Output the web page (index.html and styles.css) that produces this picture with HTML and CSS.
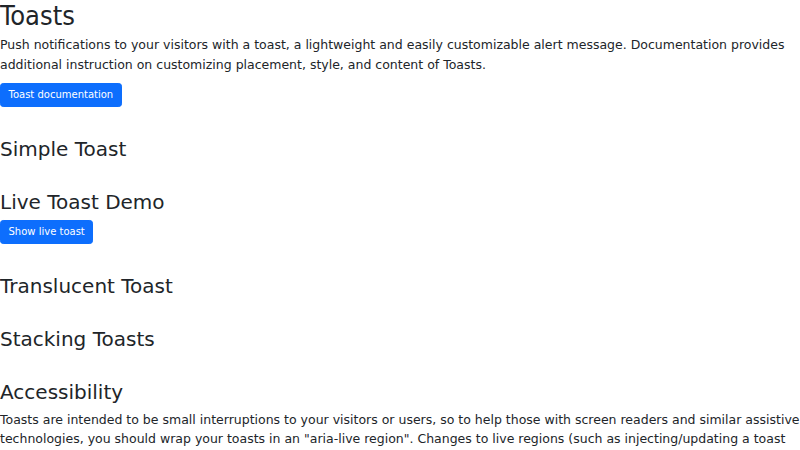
FILE: index.html
```html
<!DOCTYPE html>
<html lang="en">
<head>
<meta charset="utf-8">
<title>Toasts</title>
<link rel="stylesheet" href="styles.css">
</head>
<body>
<main class="page">
  <h1 class="title">Toasts</h1>
  <p class="text intro-text">Push notifications to your visitors with a toast, a lightweight and easily customizable alert message. Documentation provides additional instruction on customizing placement, style, and content of Toasts.</p>
  <div class="btn-row"><a class="btn" href="#">Toast documentation</a></div>

  <section class="section">
    <h3 class="section-title">Simple Toast</h3>
  </section>

  <section class="section">
    <h3 class="section-title">Live Toast Demo</h3>
    <div class="btn-row"><button class="btn" type="button">Show live toast</button></div>
  </section>

  <section class="section">
    <h3 class="section-title">Translucent Toast</h3>
  </section>

  <section class="section">
    <h3 class="section-title">Stacking Toasts</h3>
  </section>

  <section class="section">
    <h3 class="section-title">Accessibility</h3>
    <p class="text">Toasts are intended to be small interruptions to your visitors or users, so to help those with screen readers and similar assistive technologies, you should wrap your toasts in an "aria-live region". Changes to live regions (such as injecting/updating a toast component) are automatically announced by screen readers without needing to move the user's focus or otherwise interrupt the user.</p>
  </section>
</main>
</body>
</html>
```

FILE: styles.css
```css
html, body {
  margin: 0;
  padding: 0;
  background: #fff;
}
body {
  font-family: "DejaVu Sans", sans-serif;
  font-size: 12.5px;
  line-height: 19.6px;
  color: #212529;
}
.page {
  display: flex;
  flex-direction: column;
}
.title {
  font-family: "DejaVu Sans Condensed", "DejaVu Sans", sans-serif;
  font-size: 27px;
  font-weight: 500;
  line-height: 1.15;
  margin: 0 0 4.4px;
}
.text {
  margin: 0;
}
.intro-text {
  margin-bottom: 8.4px;
}
.btn-row {
  display: flex;
  margin-bottom: 7.3px;
}
.section {
  display: flex;
  flex-direction: column;
  margin-top: 22.8px;
}
.section-title {
  font-size: 20px;
  font-weight: 500;
  line-height: 24px;
  margin: 0 0 6.2px;
}
.btn {
  display: inline-block;
  font-family: "DejaVu Sans", sans-serif;
  font-size: 10px;
  line-height: 15.3px;
  padding: 3.2px 7.5px;
  color: #fff;
  background: #0d6efd;
  border: 0.8px solid #0d6efd;
  border-radius: 3.2px;
  text-decoration: none;
  cursor: pointer;
}
```
